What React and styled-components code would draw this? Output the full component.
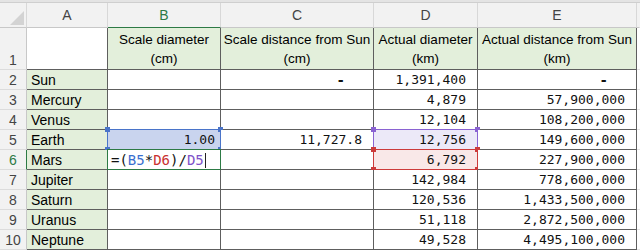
import React from "react";
import styled, { createGlobalStyle, css } from "styled-components";

const GlobalStyle = createGlobalStyle`
  html, body { margin: 0; padding: 0; background: #fff; }
  body { font-family: "Liberation Sans", Arial, sans-serif; }
`;

const COLS = ["A", "B", "C", "D", "E"];

const rows = [
  { n: 2, name: "Sun", d: "1,391,400", e: "-", c: "-" },
  { n: 3, name: "Mercury", d: "4,879", e: "57,900,000" },
  { n: 4, name: "Venus", d: "12,104", e: "108,200,000" },
  { n: 5, name: "Earth", b: "1.00", c: "11,727.8", d: "12,756", e: "149,600,000" },
  { n: 6, name: "Mars", d: "6,792", e: "227,900,000" },
  { n: 7, name: "Jupiter", d: "142,984", e: "778,600,000" },
  { n: 8, name: "Saturn", d: "120,536", e: "1,433,500,000" },
  { n: 9, name: "Uranus", d: "51,118", e: "2,872,500,000" },
  { n: 10, name: "Neptune", d: "49,528", e: "4,495,100,000" },
];

const refs = {
  blue: { line: "#4a74c9", fill: "#c9d4ee" },
  purple: { line: "#8a63d2", fill: "#ece9f8" },
  red: { line: "#cc3b3b", fill: "#f9e8e8" },
};

const Sheet = styled.div`
  display: grid;
  grid-template-columns: 27px 81px 113px 153px 104px 159px 1fr;
  grid-template-rows: 3px 25px 42px repeat(9, 20px);
  width: 640px;
  height: 251px;
  overflow: hidden;
`;

const TopStrip = styled.div`
  grid-column: 1 / -1;
  background: #e4e4e4;
  border-bottom: 1px solid #cfcfcf;
  box-sizing: border-box;
`;

const ColHead = styled.div`
  background: #f2f2f2;
  border-right: 1px solid ${(p) => (p.$last ? "transparent" : "#d8d8d8")};
  border-bottom: 1px solid ${(p) => (p.$active ? "#2d7a45" : "#c8c8c8")};
  color: ${(p) => (p.$active ? "#2d7a45" : "#444")};
  font-size: 14px;
  display: flex;
  align-items: center;
  justify-content: center;
  box-sizing: border-box;
`;

const Corner = styled(ColHead)`
  position: relative;
  svg { position: absolute; right: 2px; bottom: 2px; }
`;

const RowHead = styled.div`
  background: #f2f2f2;
  border-right: 1px solid ${(p) => (p.$active ? "#2d7a45" : "#c8c8c8")};
  border-bottom: 1px solid #dcdcdc;
  color: ${(p) => (p.$active ? "#2d7a45" : "#444")};
  font-size: 14px;
  display: flex;
  align-items: ${(p) => (p.$tall ? "flex-end" : "center")};
  justify-content: center;
  padding-bottom: ${(p) => (p.$tall ? "1px" : "0")};
  box-sizing: border-box;
`;

const Cell = styled.div`
  position: relative;
  box-sizing: border-box;
  border-right: 1px solid #5e5e5e;
  border-bottom: 1px solid #5e5e5e;
  background: ${(p) => p.$fill || "#fff"};
  color: #000;
  font-size: 14px;
  display: flex;
  align-items: center;
  justify-content: ${(p) => (p.$right ? "flex-end" : "flex-start")};
  padding: 0 ${(p) => p.$pr ?? 5}px 0 4px;
  white-space: nowrap;
  ${(p) =>
    p.$mono &&
    css`
      font-family: "DejaVu Sans Mono", "Liberation Mono", monospace;
      font-size: 13px;
      color: #111;
    `}
`;

const HeaderCell = styled(Cell)`
  flex-direction: column;
  align-items: center;
  justify-content: flex-end;
  text-align: center;
  line-height: 19px;
  padding: 0 2px 1px;
  font-size: 13.5px;
`;

const Dash = styled.span`
  font-weight: bold;
  font-size: 14px;
`;

const Empty = styled.div`
  border-bottom: 1px solid #e3e3e3;
`;

const Outline = styled.div`
  position: absolute;
  inset: -1px;
  border: 1px solid ${(p) => p.$color};
  pointer-events: none;
`;

const Handle = styled.span`
  position: absolute;
  width: 5px;
  height: 5px;
  background: ${(p) => p.$color};
  ${(p) => (p.$top ? "top: -3px;" : "bottom: -3px;")}
  ${(p) => (p.$left ? "left: -3px;" : "right: -3px;")}
`;

const Formula = styled.span`
  font-family: "DejaVu Sans Mono", "Liberation Mono", monospace;
  font-size: 14px;
  color: #111;
  margin-left: -1px;
`;

const Ref = styled.span`
  color: ${(p) => p.$color};
`;

const Caret = styled.span`
  display: inline-block;
  width: 1px;
  height: 15px;
  background: #222;
  margin-left: 1px;
  vertical-align: -3px;
`;

const RefBox = ({ color }) => (
  <>
    <Outline $color={color} />
    <Handle $color={color} $top $left />
    <Handle $color={color} $top />
    <Handle $color={color} $left />
    <Handle $color={color} />
  </>
);

const GREEN = "#e3efdb";

const val = (v) => (v === "-" ? <Dash>-</Dash> : v);
const pad = (v) => (v === "-" ? 28 : 11);

export default function App() {
  return (
    <>
      <GlobalStyle />
      <Sheet>
        <TopStrip />
        <Corner>
          <svg width="14" height="14" viewBox="0 0 14 14">
            <polygon points="14,0 14,14 0,14" fill="#d3d3d3" />
          </svg>
        </Corner>
        {COLS.map((c) => (
          <ColHead key={c} $active={c === "B"}>
            {c}
          </ColHead>
        ))}
        <ColHead $last />

        <RowHead $tall>1</RowHead>
        <Cell />
        <HeaderCell $fill={GREEN}>
          <span>Scale diameter</span>
          <span>(cm)</span>
        </HeaderCell>
        <HeaderCell $fill={GREEN}>
          <span>Scale distance from Sun</span>
          <span>(cm)</span>
        </HeaderCell>
        <HeaderCell $fill={GREEN}>
          <span>Actual diameter</span>
          <span>(km)</span>
        </HeaderCell>
        <HeaderCell $fill={GREEN}>
          <span>Actual distance from Sun</span>
          <span>(km)</span>
        </HeaderCell>
        <Empty />

        {rows.map((r) => {
          const isMars = r.n === 6;
          const isEarth = r.n === 5;
          return (
            <React.Fragment key={r.n}>
              <RowHead $active={isMars}>{r.n}</RowHead>
              <Cell $fill={GREEN}>{r.name}</Cell>
              <Cell
                $right={!isMars}
                $mono
                $pr={5}
                $fill={isEarth ? refs.blue.fill : undefined}
              >
                {isMars ? (
                  <Formula>
                    =(<Ref $color="#3a6fd0">B5</Ref>*<Ref $color="#c93030">D6</Ref>)/
                    <Ref $color="#7f52c9">D5</Ref>
                    <Caret />
                  </Formula>
                ) : (
                  r.b
                )}
                {isEarth && <RefBox color={refs.blue.line} />}
                {isMars && <Outline $color="#2d7a45" />}
              </Cell>
              <Cell $right $mono $pr={pad(r.c)}>
                {val(r.c)}
              </Cell>
              <Cell
                $right
                $mono
                $pr={11}
                $fill={isEarth ? refs.purple.fill : isMars ? refs.red.fill : undefined}
              >
                {r.d}
                {isEarth && <RefBox color={refs.purple.line} />}
                {isMars && <RefBox color={refs.red.line} />}
              </Cell>
              <Cell $right $mono $pr={pad(r.e)}>
                {val(r.e)}
              </Cell>
              <Empty />
            </React.Fragment>
          );
        })}
      </Sheet>
    </>
  );
}
